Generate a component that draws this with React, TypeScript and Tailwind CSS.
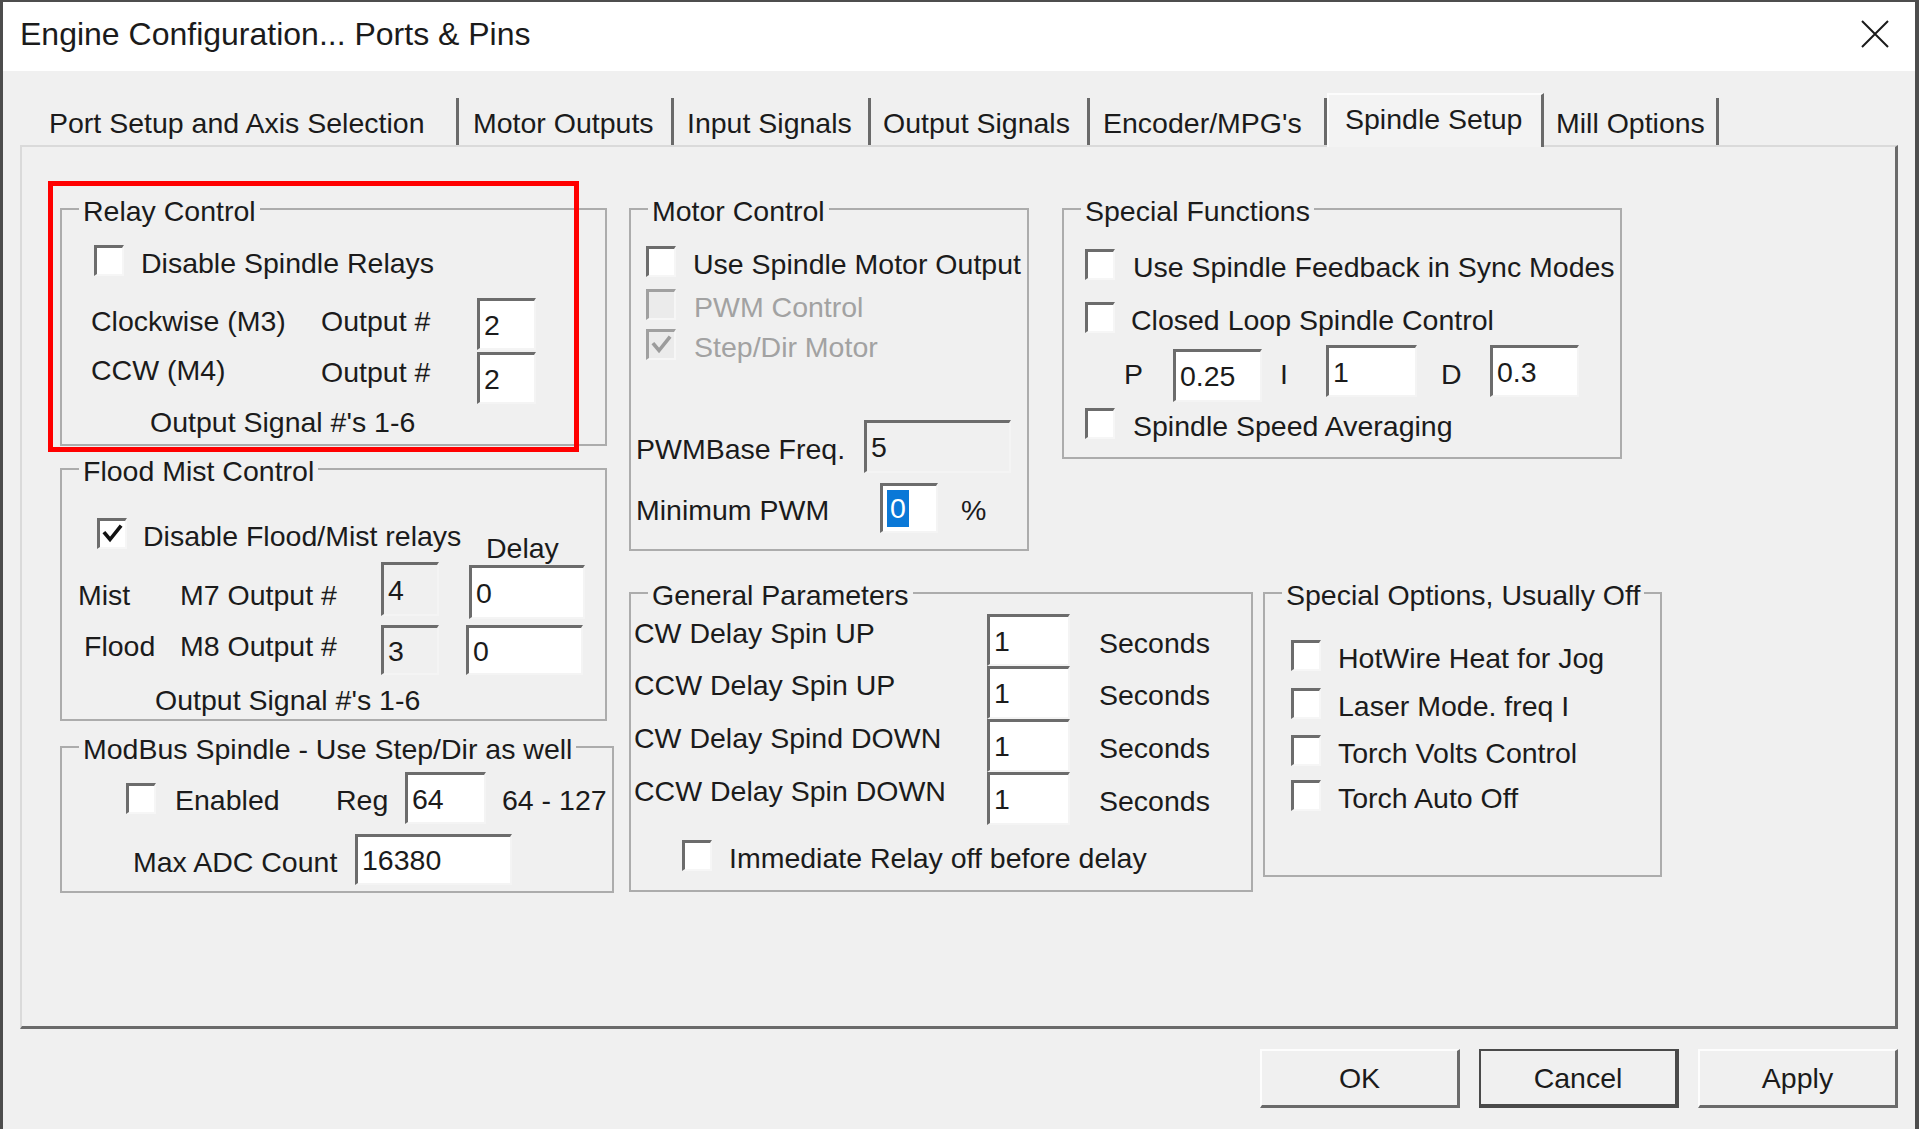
import type { ReactNode } from 'react';

function Check({ checked = false, disabled = false }: { checked?: boolean; disabled?: boolean }) {
  return (
    <div
      className={`relative w-[30px] h-[31px] shrink-0 border-t-[3px] border-l-[3px] border-r-2 border-b-2 border-r-[#f6f6f6] border-b-[#f6f6f6] ${
        disabled ? 'bg-[#ebebeb] border-t-[#a0a0a0] border-l-[#a0a0a0]' : 'bg-white border-t-[#6c6c6c] border-l-[#6c6c6c]'
      }`}
    >
      {checked && (
        <svg viewBox="0 0 25 26" className="absolute inset-0 w-full h-full">
          <path
            d="M5 12.5 L10 18.5 L20 6"
            fill="none"
            stroke={disabled ? '#9c9c9c' : '#111'}
            strokeWidth="3.6"
            strokeLinecap="square"
          />
        </svg>
      )}
    </div>
  );
}

function Field({ className, children, disabled = false }: { className: string; children?: ReactNode; disabled?: boolean }) {
  return (
    <div
      className={`flex items-center shrink-0 pl-[4px] border-t-[3px] border-l-[3px] border-r-2 border-b-2 border-t-[#6c6c6c] border-l-[#6c6c6c] border-r-[#f4f4f4] border-b-[#f4f4f4] ${
        disabled ? 'bg-[#f0f0f0]' : 'bg-white'
      } ${className}`}
    >
      {children}
    </div>
  );
}

function Group({ title, className, children }: { title: string; className: string; children: ReactNode }) {
  return (
    <fieldset className={`border-2 border-[#acacac] shrink-0 ${className}`}>
      <legend className="ml-[17px] px-[4px] leading-[32px] whitespace-nowrap">
        <span>{title}</span>
      </legend>
      {children}
    </fieldset>
  );
}

function Tab({ label, className, active = false }: { label: string; className: string; active?: boolean }) {
  return (
    <div
      className={`flex items-center whitespace-nowrap shrink-0 border-r-[3px] border-r-[#6a6a6a] ${
        active
          ? 'h-[54px] -mb-[2px] pb-[5px] relative z-10 bg-[#f3f3f3] border-t-2 border-l-2 border-t-[#fcfcfc] border-l-[#fcfcfc]'
          : 'h-[47px] pt-[2px]'
      } ${className}`}
    >
      {label}
    </div>
  );
}

function Button({ label, primary = false }: { label: string; primary?: boolean }) {
  return (
    <div
      className={`w-[200px] h-[59px] flex items-center justify-center bg-[#f0f0f0] ${
        primary
          ? 'border-t-2 border-l-2 border-r-4 border-b-4 border-[#4a4a4a]'
          : 'border-t-2 border-l-2 border-t-[#fdfdfd] border-l-[#fdfdfd] border-r-[3px] border-b-[3px] border-r-[#6a6a6a] border-b-[#6a6a6a]'
      }`}
    >
      {label}
    </div>
  );
}

export default function App() {
  return (
    <div className="relative w-[1919px] h-[1129px] overflow-hidden bg-[#f0f0f0] border-t-2 border-l-[3px] border-r-4 border-[#4d4d4d] font-['Liberation_Sans',Arial,sans-serif] text-[28.5px] leading-[32px] text-[#1b1b1b] [&_span]:relative [&_span]:top-[2px]">
      {/* title bar */}
      <div className="h-[69px] bg-white flex items-center justify-between pl-[17px] pr-[25px] pb-[5px]">
        <div className="text-[32px] leading-[36px]">Engine Configuration... Ports &amp; Pins</div>
        <svg width="30" height="30" viewBox="0 0 30 30">
          <path d="M2 2 L28 28 M28 2 L2 28" stroke="#1a1a1a" strokeWidth="2" />
        </svg>
      </div>

      {/* tabs */}
      <div className="h-[74px] flex items-end pl-[21px]">
        <Tab label="Port Setup and Axis Selection" className="w-[435px] pl-[25px]" />
        <Tab label="Motor Outputs" className="w-[215px] pl-[14px]" />
        <Tab label="Input Signals" className="w-[197px] pl-[13px]" />
        <Tab label="Output Signals" className="w-[219px] pl-[12px]" />
        <Tab label="Encoder/MPG's" className="w-[237px] pl-[13px] border-r-0" />
        <Tab label="Spindle Setup" className="w-[217px] pl-[16px]" active />
        <Tab label="Mill Options" className="w-[175px] pl-[12px]" />
      </div>

      {/* tab page */}
      <div className="ml-[17px] w-[1878px] h-[884px] border-t-2 border-l-2 border-t-[#dadada] border-l-[#dadada] border-r-[3px] border-b-[3px] border-r-[#6a6a6a] border-b-[#6a6a6a] pt-[46px] pl-[38px] flex">
        {/* left column */}
        <div className="flex flex-col w-[554px]">
          <Group title="Relay Control" className="w-[547px] h-[253px]">
            <div className="flex items-center h-[31px] mt-[20px] ml-[32px]">
              <Check />
              <span className="ml-[17px]">Disable Spindle Relays</span>
            </div>
            <div className="flex items-start h-[52px] mt-[22px] ml-[29px]">
              <span className="w-[230px] mt-[5px]">Clockwise (M3)</span>
              <span className="w-[156px] mt-[5px]">Output #</span>
              <Field className="w-[59px] h-[52px]">2</Field>
            </div>
            <div className="flex items-start h-[52px] mt-[2px] ml-[29px]">
              <span className="w-[230px]">CCW (M4)</span>
              <span className="w-[156px] mt-[2px]">Output #</span>
              <Field className="w-[59px] h-[52px]">2</Field>
            </div>
            <div className="ml-[88px]">
              <span>Output Signal #'s 1-6</span>
            </div>
          </Group>

          <Group title="Flood Mist Control" className="w-[547px] h-[268px] mt-[7px]">
            <div className="flex items-start mt-[33px] ml-[35px]">
              <Check checked />
              <span className="w-[343px] ml-[16px]">Disable Flood/Mist relays</span>
              <span className="mt-[12px]">Delay</span>
            </div>
            <div className="flex items-start ml-[16px]">
              <span className="w-[102px] mt-[15px]">Mist</span>
              <span className="w-[201px] mt-[15px]">M7 Output #</span>
              <Field className="w-[58px] h-[54px]" disabled>4</Field>
              <Field className="w-[116px] h-[54px] ml-[30px] mt-[3px]">0</Field>
            </div>
            <div className="flex items-start mt-[6px] ml-[22px]">
              <span className="w-[96px] mt-[3px]">Flood</span>
              <span className="w-[201px] mt-[3px]">M8 Output #</span>
              <Field className="w-[58px] h-[50px]" disabled>3</Field>
              <Field className="w-[117px] h-[50px] ml-[27px]">0</Field>
            </div>
            <div className="ml-[93px] mt-[7px]">
              <span>Output Signal #'s 1-6</span>
            </div>
          </Group>

          <Group title="ModBus Spindle - Use Step/Dir as well" className="w-[554px] h-[162px] mt-[10px]">
            <div className="flex items-center h-[52px] mt-[9px] ml-[64px]">
              <Check />
              <span className="w-[161px] ml-[19px]">Enabled</span>
              <span className="w-[69px]">Reg</span>
              <Field className="w-[81px] h-[52px]">64</Field>
              <span className="ml-[16px] whitespace-nowrap">64 - 127</span>
            </div>
            <div className="flex items-center h-[51px] mt-[10px] ml-[71px]">
              <span className="w-[222px]">Max ADC Count</span>
              <Field className="w-[157px] h-[51px]">16380</Field>
            </div>
          </Group>
        </div>

        {/* right area */}
        <div className="flex flex-col ml-[15px]">
          <div className="flex items-start">
            <Group title="Motor Control" className="w-[400px] h-[358px]">
              <div className="flex items-center h-[31px] mt-[21px] ml-[15px]">
                <Check />
                <span className="ml-[17px] whitespace-nowrap">Use Spindle Motor Output</span>
              </div>
              <div className="flex items-center h-[31px] mt-[12px] ml-[15px] text-[#a2a2a2]">
                <Check disabled />
                <span className="ml-[18px]">PWM Control</span>
              </div>
              <div className="flex items-center h-[31px] mt-[9px] ml-[15px] text-[#a2a2a2]">
                <Check checked disabled />
                <span className="ml-[18px]">Step/Dir Motor</span>
              </div>
              <div className="flex items-center h-[53px] mt-[60px] ml-[5px]">
                <span className="w-[228px]">PWMBase Freq.</span>
                <Field className="w-[147px] h-[53px]" disabled>5</Field>
              </div>
              <div className="flex items-center h-[50px] mt-[10px] ml-[5px]">
                <span className="w-[244px]">Minimum PWM</span>
                <Field className="w-[58px] h-[50px]">
                  <div className="bg-[#0a78d7] text-white h-[37px] leading-[37px] px-[3px]">0</div>
                </Field>
                <span className="ml-[23px]">%</span>
              </div>
            </Group>

            <Group title="Special Functions" className="w-[560px] h-[266px] ml-[33px]">
              <div className="flex items-center h-[31px] mt-[24px] ml-[21px] whitespace-nowrap">
                <Check />
                <span className="ml-[18px]">Use Spindle Feedback in Sync Modes</span>
              </div>
              <div className="flex items-center h-[31px] mt-[22px] ml-[21px]">
                <Check />
                <span className="ml-[16px]">Closed Loop Spindle Control</span>
              </div>
              <div className="flex items-start mt-[12px] ml-[60px]">
                <span className="w-[49px] mt-[11px]">P</span>
                <Field className="w-[89px] h-[53px] mt-[4px]">0.25</Field>
                <span className="w-[46px] ml-[18px] mt-[11px]">I</span>
                <Field className="w-[91px] h-[52px]">1</Field>
                <span className="w-[49px] ml-[24px] mt-[11px]">D</span>
                <Field className="w-[89px] h-[52px]">0.3</Field>
              </div>
              <div className="flex items-center h-[31px] mt-[6px] ml-[21px]">
                <Check />
                <span className="ml-[18px]">Spindle Speed Averaging</span>
              </div>
            </Group>
          </div>

          <div className="flex items-start mt-[26px]">
            <Group title="General Parameters" className="w-[624px] h-[315px]">
              <div className="mt-[5px] ml-[3px]">
                {[
                  ['CW Delay Spin UP', 'h-[52px]'],
                  ['CCW Delay Spin UP', 'h-[53px]'],
                  ['CW Delay Spind DOWN', 'h-[53px]'],
                  ['CCW Delay Spin DOWN', 'h-[53px]'],
                ].map(([label, h]) => (
                  <div key={label} className={`flex items-start ${h}`}>
                    <span className="w-[353px] mt-[1px] whitespace-nowrap">{label}</span>
                    <Field className={`w-[83px] ${h}`}>1</Field>
                    <span className="ml-[29px] mt-[11px]">Seconds</span>
                  </div>
                ))}
              </div>
              <div className="flex items-center h-[31px] mt-[15px] ml-[51px]">
                <Check />
                <span className="ml-[17px]">Immediate Relay off before delay</span>
              </div>
            </Group>

            <Group title="Special Options, Usually Off" className="w-[399px] h-[300px] ml-[10px]">
              <div className="flex items-center h-[31px] mt-[31px] ml-[26px]">
                <Check />
                <span className="ml-[17px]">HotWire Heat for Jog</span>
              </div>
              <div className="flex items-center h-[31px] mt-[17px] ml-[26px]">
                <Check />
                <span className="ml-[17px]">Laser Mode. freq I</span>
              </div>
              <div className="flex items-center h-[31px] mt-[16px] ml-[26px]">
                <Check />
                <span className="ml-[17px]">Torch Volts Control</span>
              </div>
              <div className="flex items-center h-[31px] mt-[14px] ml-[26px]">
                <Check />
                <span className="ml-[17px]">Torch Auto Off</span>
              </div>
            </Group>
          </div>
        </div>
      </div>

      {/* dialog buttons */}
      <div className="flex justify-end gap-[19px] pr-[17px] mt-[20px]">
        <Button label="OK" />
        <Button label="Cancel" primary />
        <Button label="Apply" />
      </div>

      {/* red annotation */}
      <div className="absolute left-[45px] top-[179px] w-[531px] h-[271px] border-[5px] border-[#ff0000] pointer-events-none" />
    </div>
  );
}
